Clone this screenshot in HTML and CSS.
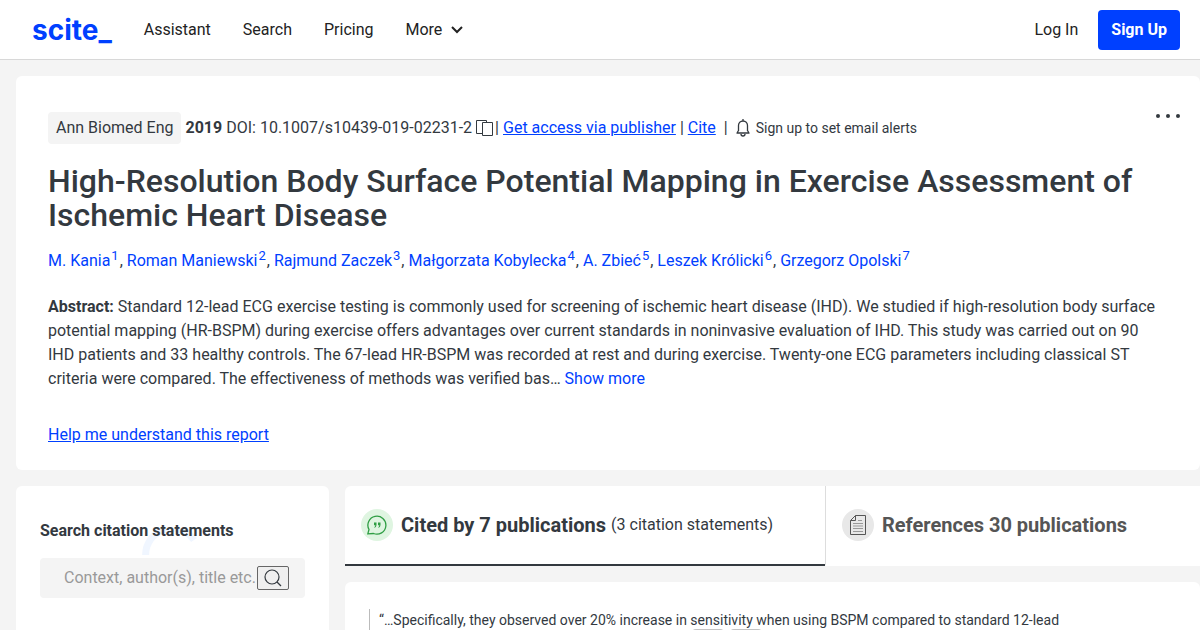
FILE: index.html
```html
<!DOCTYPE html>
<html lang="en">
<head>
    <meta charset="utf-8">
    <meta name="viewport" content="width=device-width, initial-scale=1">
    <title>High-Resolution Body Surface Potential Mapping - scite</title>
    <link rel="stylesheet" href="styles.css">
</head>
<body>
    <header class="navbar">
        <a class="logo" href="#">scite_</a>
        <nav class="nav-links">
            <a href="#">Assistant</a>
            <a href="#">Search</a>
            <a href="#">Pricing</a>
            <button class="more" type="button">More
                <svg width="14" height="10" viewBox="0 0 14 10" fill="none" stroke="currentColor" stroke-width="2"><path d="M2 2l5 5 5-5"/></svg>
            </button>
        </nav>
        <a class="login" href="#">Log In</a>
        <button class="signup" type="button">Sign Up</button>
    </header>

    <main class="page">
        <!-- Paper details -->
        <section class="card paper">
            <button class="menu" type="button" aria-label="More options">
                <svg width="24" height="4" viewBox="0 0 24 4" fill="currentColor"><circle cx="2" cy="2" r="2"/><circle cx="12" cy="2" r="2"/><circle cx="22" cy="2" r="2"/></svg>
            </button>
            <div class="meta">
                <span class="journal">Ann Biomed Eng</span>
                <b>2019</b>
                <span class="doi">DOI: 10.1007/s10439-019-02231-2</span>
                <span class="copy-group">
                    <button class="copy" type="button" aria-label="Copy DOI">
                        <svg width="17" height="17" viewBox="0 0 17 17" fill="none" stroke="currentColor"><path d="M6 13.500H.5V.5h10v2M6.500 2.500h10v13h-10z"/></svg>
                    </button>
                    <span>|</span>
                </span>
                <a href="#">Get access via publisher</a>
                <span>|</span>
                <a href="#">Cite</a>
                <span class="bar">|</span>
                <button class="alerts" type="button">
                    <svg width="14" height="18" viewBox="0 0 14 18" fill="none" stroke="currentColor" stroke-width="1.300"><path d="M7 0v2M.5 14h13M2.500 12V6.500a4.500 4.500 0 0 1 9 0V12M1 14l1.500-2.500M13 14l-1.500-2.500M5 15a2 2 0 0 0 4 0"/></svg>
                    Sign up to set email alerts
                </button>
            </div>
            <h1>High-Resolution Body Surface Potential Mapping in Exercise Assessment of Ischemic Heart Disease</h1>
            <p class="authors">
                <a href="#">M. Kania<sup>1</sup></a>,
                <a href="#">Roman Maniewski<sup>2</sup></a>,
                <a href="#">Rajmund Zaczek<sup>3</sup></a>,
                <a href="#">Małgorzata Kobylecka<sup>4</sup></a>,
                <a href="#">A. Zbieć<sup>5</sup></a>,
                <a href="#">Leszek Królicki<sup>6</sup></a>,
                <a href="#">Grzegorz Opolski<sup>7</sup></a>
            </p>
            <p class="abstract"><b>Abstract:</b> Standard 12-lead ECG exercise testing is commonly used for screening of ischemic heart disease (IHD). We studied if high-resolution body surface potential mapping (HR-BSPM) during exercise offers advantages over current standards in noninvasive evaluation of IHD. This study was carried out on 90 IHD patients and 33 healthy controls. The 67-lead HR-BSPM was recorded at rest and during exercise. Twenty-one ECG parameters including classical ST criteria were compared. The effectiveness of methods was verified bas… <a href="#">Show more</a></p>
            <a class="help" href="#">Help me understand this report</a>
        </section>

        <div class="columns">
            <aside class="card sidebar">
                <svg class="spinner" width="60" height="60" viewBox="0 0 60 60" fill="none" stroke="#f0f6ff" stroke-width="7"><path d="M3.600 27A26.500 26.500 0 0 1 52 12"/></svg>
                <label for="search">Search citation statements</label>
                <form class="search-box">
                    <input id="search" type="text" placeholder="Context, author(s), title etc.">
                    <button type="button" aria-label="Search">
                        <svg width="18" height="18" viewBox="0 0 18 18" fill="none" stroke="currentColor" stroke-width="1.200"><circle cx="8" cy="8" r="7"/><path d="M13 13l4 4"/></svg>
                    </button>
                </form>
            </aside>

            <section class="results">
                <div class="tabs">
                    <button class="tab active" type="button">
                        <span class="tab-icon">
                            <svg width="20" height="20" viewBox="0 0 20 20" fill="none" stroke="currentColor" stroke-width="1.300"><path d="M.8 18.800L2 14.500A9 9 0 1 1 6.500 18.500z"/><path fill="currentColor" stroke="none" d="M7 7.500h2.500v2.500q0 2-2 3v-1q.8-.5.8-1.800H7zM11 7.500h2.500v2.500q0 2-2 3v-1q.8-.5.8-1.800H11z"/></svg>
                        </span>
                        <span class="tab-title">Cited by 7 publications</span>
                        <span class="tab-count">(3 citation statements)</span>
                    </button>
                    <button class="tab" type="button">
                        <span class="tab-icon">
                            <svg width="16" height="20" viewBox="0 0 16 20" fill="none" stroke="currentColor"><path d="M5.500.5h10v19H.5v-14zM5.500.5v5h-5"/><path stroke="#999" d="M8 5.500h4M3 8.500h10M3 11h10M3 13.500h10M3 16.500h10"/></svg>
                        </span>
                        <span class="tab-title">References 30 publications</span>
                    </button>
                </div>
                <article class="card statement">
                    <blockquote>
                        “…Specifically, they observed over 20% increase in sensitivity when using BSPM compared to standard 12-lead
                        <div class="refs"><span></span><span></span></div>
                    </blockquote>
                </article>
            </section>
        </div>
    </main>
</body>
</html>
```
FILE: styles.css
```css
:root {
    --blue: #0040ff;
    --text: #33393f;
    --grey: #f4f4f4;
}

* {
    box-sizing: border-box;
}

body {
    margin: 0;
    font-family: Roboto, "Liberation Sans", sans-serif;
    font-size: 16px;
    line-height: 24px;
    color: var(--text);
    background: var(--grey);
    overflow: hidden;
}

a {
    color: var(--blue);
}

button {
    padding: 0;
    border: none;
    background: none;
    font: inherit;
    color: inherit;
    cursor: pointer;
}

/* Top navigation */
.navbar {
    display: flex;
    align-items: center;
    height: 60px;
    padding: 1px 20px 0 32px;
    background: #fff;
    border-bottom: 1px solid #d8d8d8;
}

.navbar a {
    color: #222;
    text-decoration: none;
}

.navbar .logo {
    margin-right: 32px;
    font-family: Inter, sans-serif;
    font-size: 28px;
    font-weight: 700;
    color: var(--blue);
}

.nav-links {
    display: flex;
    flex: 1;
    gap: 32px;
    color: #222;
}

.more {
    display: flex;
    align-items: center;
    gap: 8px;
}

.navbar .signup {
    height: 40px;
    margin-left: 20px;
    padding: 0 13px;
    border-radius: 4px;
    background: var(--blue);
    color: #fff;
    font-weight: 700;
}

/* Cards */
.page {
    padding: 16px 0 0 16px;
}

.card {
    position: relative;
    background: #fff;
    border-radius: 6px;
}

.paper {
    padding: 36px 32px 23px;
}

.menu {
    position: absolute;
    top: 38px;
    right: 20px;
    display: flex;
}

.meta {
    display: flex;
    align-items: center;
    gap: 4px;
    height: 32px;
}

.journal {
    padding: 4px 8px;
    border-radius: 4px;
    background: var(--grey);
}

.copy-group,
.alerts {
    display: flex;
    align-items: center;
}

.copy-group {
    gap: 2px;
}

.copy {
    display: flex;
}

.alerts {
    gap: 6px;
    font-size: 14px;
}

.bar {
    margin: 0 4px;
}

h1 {
    margin: 20px 0 17px;
    font-size: 32px;
    line-height: 34px;
    font-weight: 500;
}

.authors {
    margin: 0 0 22px;
}

.authors a,
.abstract a {
    text-decoration: none;
}

sup {
    margin: 0 1px;
    font-size: 13px;
    line-height: 0;
}

.abstract {
    margin: 0 0 32px;
}

.columns {
    display: flex;
    gap: 16px;
    margin-top: 16px;
}

/* Search sidebar */
.sidebar {
    width: 313px;
    min-height: 320px;
    padding: 33px 24px;
}

.sidebar label {
    position: relative;
    font-weight: 700;
}

.spinner {
    position: absolute;
    top: 42px;
    left: 126px;
}

.search-box {
    display: flex;
    align-items: center;
    height: 40px;
    margin-top: 15px;
    padding: 0 16px 0 24px;
    border-radius: 4px;
    background: var(--grey);
}

.search-box input {
    flex: 1;
    min-width: 0;
    padding: 0;
    border: none;
    background: none;
    font: inherit;
}

.search-box input::placeholder {
    color: #999;
}

.search-box button {
    display: flex;
    align-items: center;
    justify-content: center;
    width: 32px;
    height: 24px;
    border: 1px solid #666;
    border-radius: 2px;
    background: #efefef;
}

/* Citation tabs */
.results {
    flex: 1;
    min-width: 0;
}

.tabs {
    display: grid;
    grid-template-columns: minmax(0, 480px) 1fr;
    height: 80px;
    border-radius: 6px 0 0;
    background: #fff;
}

.tab {
    display: flex;
    align-items: center;
    gap: 8px;
    padding: 0 16px;
    border-left: 1px solid #ddd;
    border-bottom: 2px solid #fff;
    color: #555;
}

.tab.active {
    border-left: none;
    border-bottom-color: var(--text);
    color: var(--text);
}

.tab-icon {
    display: flex;
    align-items: center;
    justify-content: center;
    width: 32px;
    height: 32px;
    border-radius: 50%;
    background: #e8e8e8;
}

.active .tab-icon {
    background: #dff5e1;
    color: #2f9e44;
}

.tab-title {
    font-size: 20px;
    font-weight: 700;
}

.tab-count {
    margin-left: -3px;
}

.statement {
    margin-top: 16px;
    padding: 27px 24px;
}

blockquote {
    margin: 0;
    padding: 1px 0 0 9px;
    border-left: 1px solid #bbb;
    font-size: 14px;
    line-height: 20px;
}

/* Reference chips inside the quote */
.refs {
    display: flex;
    gap: 6px;
    margin-top: -1px;
    padding-left: 313px;
}

.refs span {
    width: 32px;
    height: 20px;
    border-radius: 4px;
    background: #c4c4c4;
}
```
